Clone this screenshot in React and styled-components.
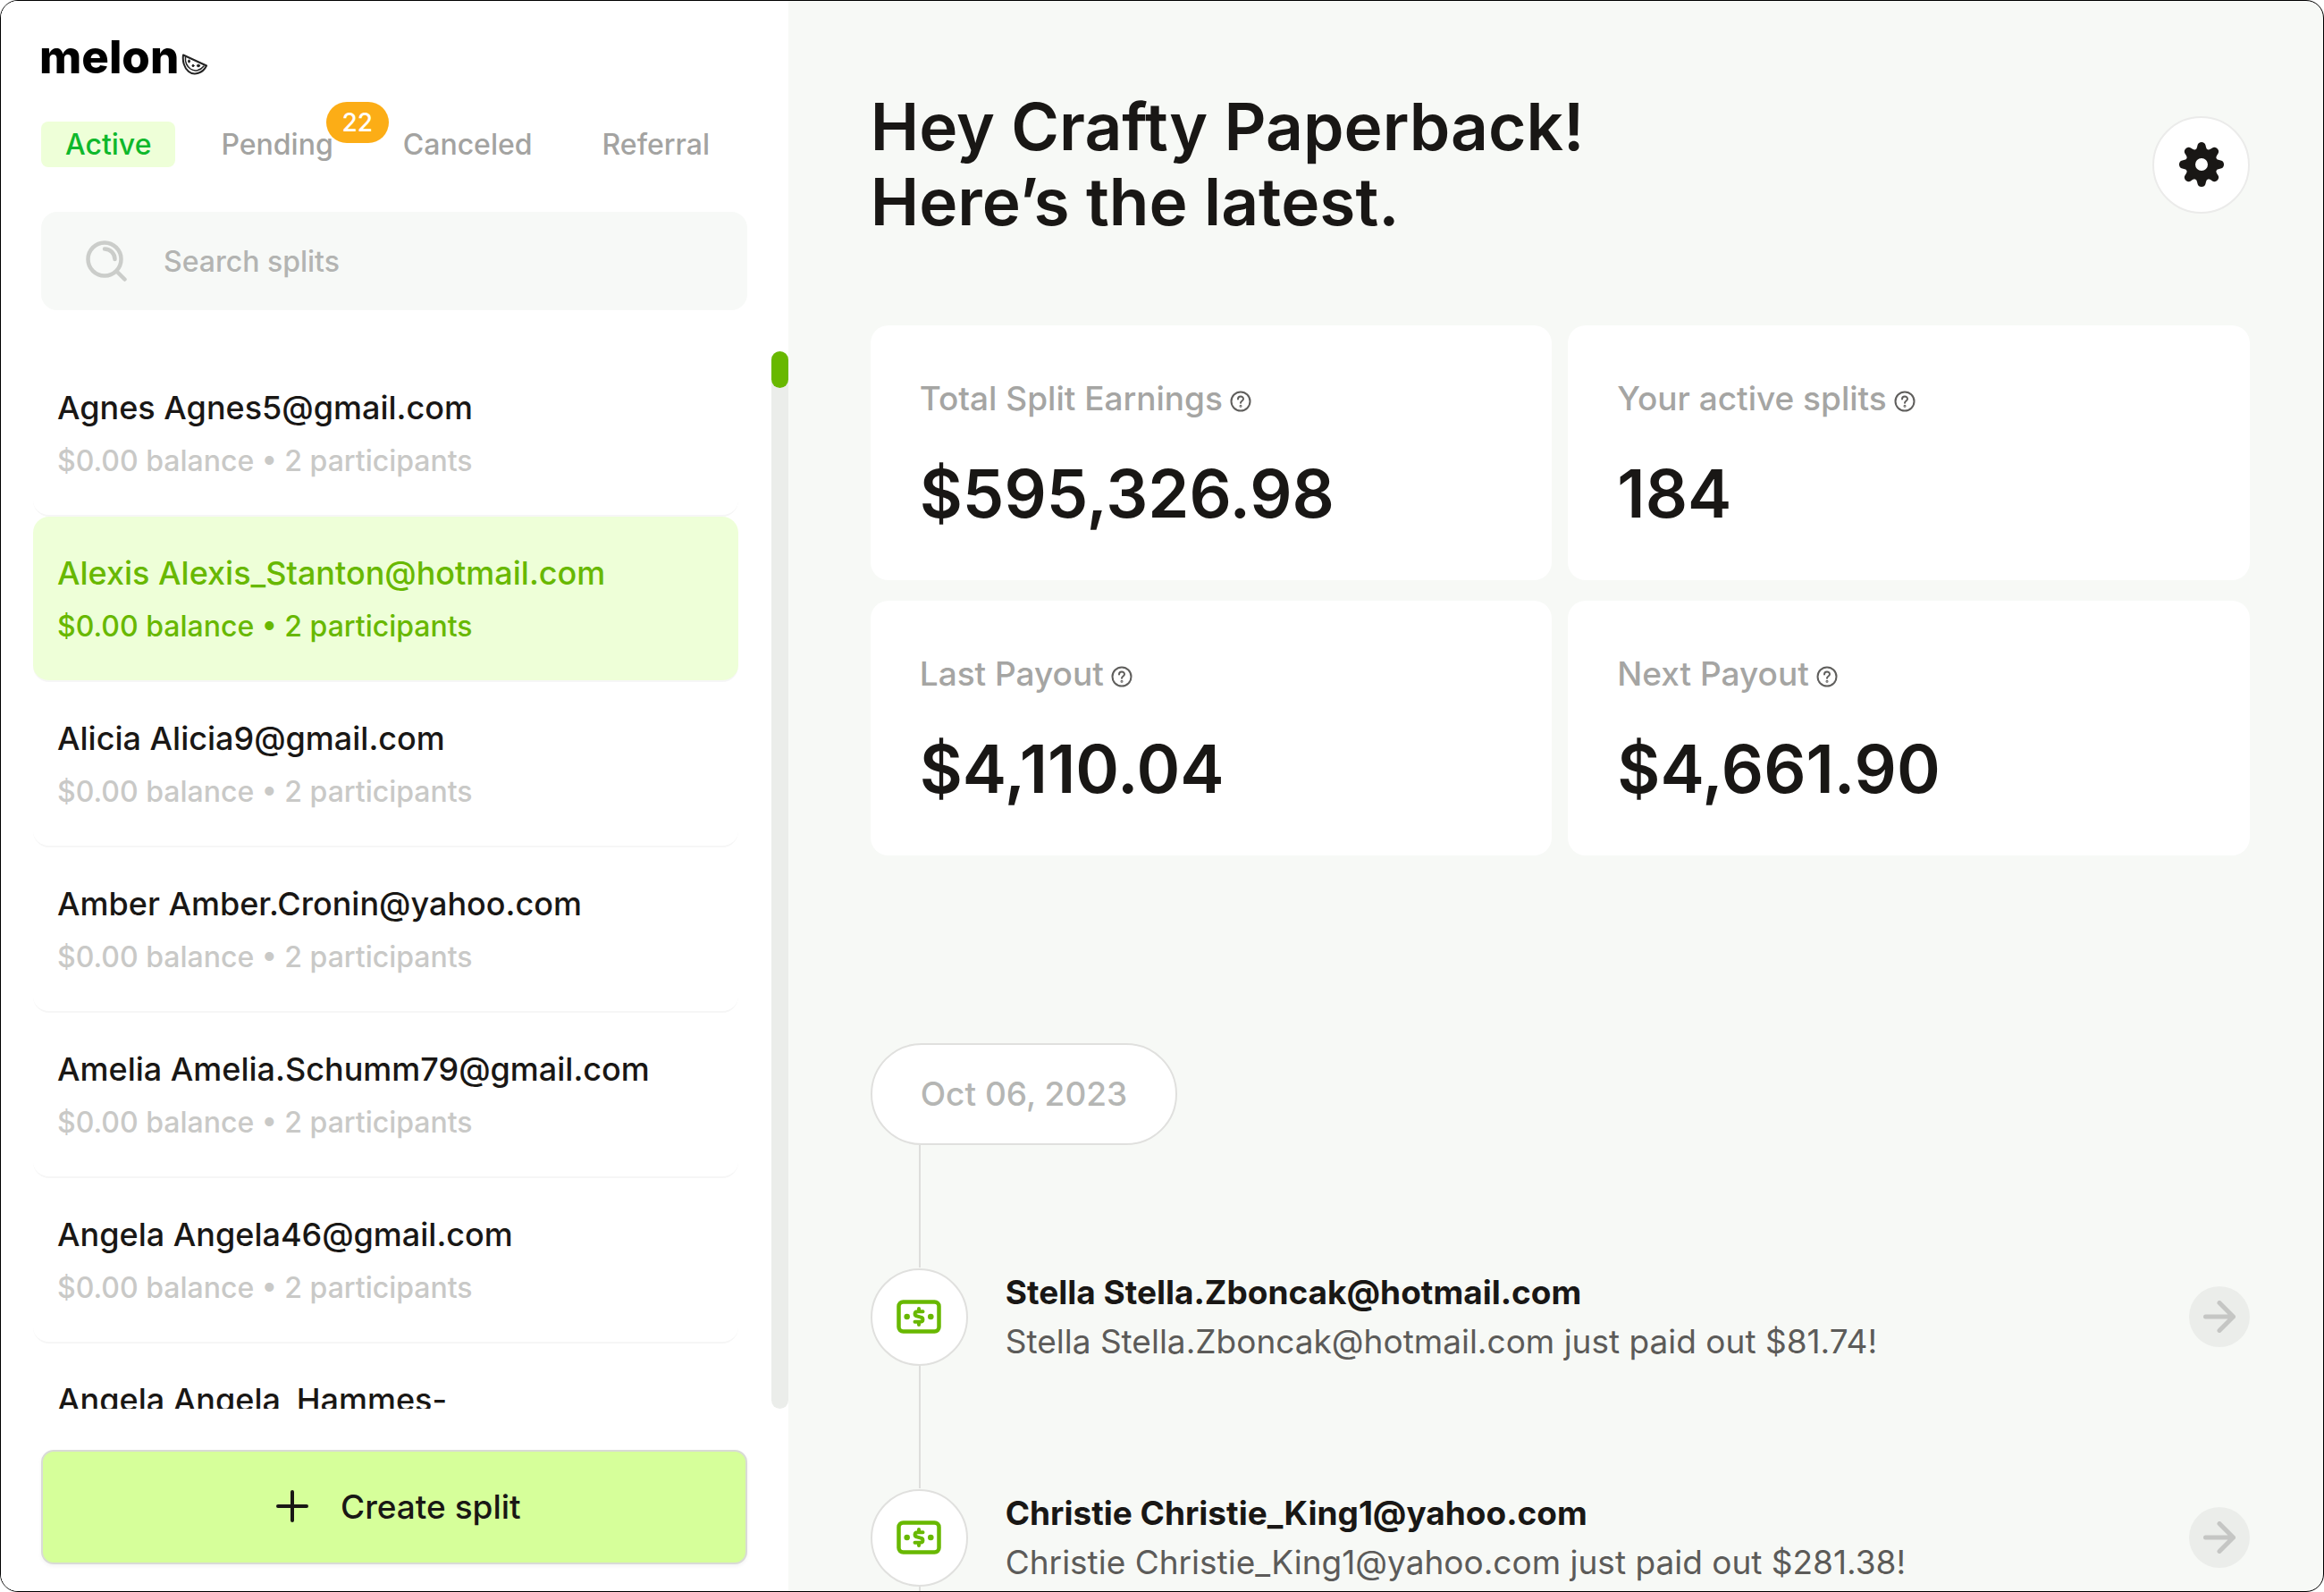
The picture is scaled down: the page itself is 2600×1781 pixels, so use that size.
import React, { useState } from 'react'
import styled, { createGlobalStyle } from 'styled-components'

const GlobalStyle = createGlobalStyle`
  * {
    box-sizing: border-box;
  }
  body {
    margin: 0;
    background: #ffffff;
    font-family: Inter, "Liberation Sans", sans-serif;
    color: #191715;
  }
  button, input {
    font-family: inherit;
    color: inherit;
  }
`

const Frame = styled.div`
  display: flex;
  height: 100vh;
  overflow: hidden;
  border: 1px solid #000000;
  border-radius: 20px;
  background: #f7f9f6;
`

const Sidebar = styled.aside`
  display: flex;
  flex-direction: column;
  flex: 0 0 33.9%;
  min-width: 0;
  padding: 33px 0 30px;
  background: #ffffff;
`

const Logo = styled.a`
  display: flex;
  align-items: center;
  gap: 3px;
  margin: 0 43px 42px;
  font-size: 51px;
  line-height: 60px;
  font-weight: 800;
  color: #000000;
  text-decoration: none;
`

const MelonSlice = styled.svg`
  width: 30px;
  height: 24px;
  margin-top: 16px;
`

const Tabs = styled.nav`
  display: flex;
  gap: 24px;
  margin: 0 45px;
`

const Tab = styled.button`
  position: relative;
  height: 51px;
  padding: 0 27px;
  border: none;
  border-radius: 8px;
  font-size: 32px;
  line-height: 51px;
  font-weight: 500;
  cursor: pointer;
  background: ${(props) => (props.$active ? '#eeffd8' : 'transparent')};
  color: ${(props) => (props.$active ? '#0fb82c' : '#a3a3a1')};
`

const Badge = styled.span`
  position: absolute;
  top: -22px;
  right: -35px;
  min-width: 70px;
  height: 46px;
  border-radius: 23px;
  background: #fcad16;
  color: #ffffff;
  font-size: 28px;
  line-height: 46px;
  text-align: center;
`

const Search = styled.label`
  display: flex;
  align-items: center;
  gap: 41px;
  height: 110px;
  flex-shrink: 0;
  margin: 50px 46px 46px 45px;
  padding: 0 50px;
  border-radius: 18px;
  background: #f7f9f7;
`

const SearchInput = styled.input`
  flex: 1;
  min-width: 0;
  padding: 0;
  border: none;
  outline: none;
  background: transparent;
  font-size: 32px;
  font-weight: 500;
  &::placeholder {
    color: #b3b4b2;
    opacity: 1;
  }
`

const ListArea = styled.div`
  display: flex;
  flex: 1;
  min-height: 0;
  gap: 37px;
  padding-left: 36px;
`

const SplitList = styled.ul`
  flex: 1;
  min-width: 0;
  margin: 0;
  padding: 0;
  overflow: hidden;
  list-style: none;
`

const SplitRow = styled.button`
  display: flex;
  flex-direction: column;
  gap: 16px;
  width: 100%;
  padding: 39px 27px 40px;
  border: none;
  border-bottom: 2px solid #f6f6f6;
  border-radius: 18px;
  text-align: left;
  cursor: pointer;
  background: ${(props) => (props.$selected ? '#eeffd8' : '#ffffff')};
  color: ${(props) => (props.$selected ? '#68b800' : '#191715')};
`

const SplitName = styled.span`
  font-size: 36px;
  line-height: 48px;
  font-weight: 500;
`

const SplitMeta = styled.span`
  font-size: 32px;
  line-height: 40px;
  font-weight: 500;
  color: ${(props) => (props.$selected ? '#68b800' : '#c9c9c7')};
`

const ScrollTrack = styled.div`
  width: 19px;
  border-radius: 10px;
  background: #ebedea;
`

const ScrollThumb = styled.div`
  height: 41px;
  border-radius: 10px;
  background: #68b800;
`

const CreateButton = styled.button`
  display: flex;
  align-items: center;
  justify-content: center;
  gap: 36px;
  height: 128px;
  flex-shrink: 0;
  margin: 46px 46px 0 45px;
  padding: 0 0 2px 10px;
  border: 2px solid #d9dbd6;
  border-radius: 14px;
  background: #d6ff9a;
  box-shadow: 0 2px 4px rgba(0, 0, 0, 0.05);
  font-size: 37px;
  font-weight: 500;
  cursor: pointer;
`

const Main = styled.main`
  flex: 1;
  min-width: 0;
  padding: 99px 82px 0 92px;
  overflow: hidden;
`

const Header = styled.header`
  display: flex;
  align-items: center;
  justify-content: space-between;
  margin-bottom: 96px;
`

const Title = styled.h1`
  margin: 0;
  font-size: 73px;
  line-height: 84px;
  font-weight: 600;
`

const Round = styled.span`
  display: flex;
  align-items: center;
  justify-content: center;
  width: 109px;
  height: 109px;
  flex-shrink: 0;
  border: 2px solid #e0e0de;
  border-radius: 50%;
  background: #ffffff;
`

const SettingsButton = styled(Round)`
  padding: 0;
  border-color: #ebebea;
  cursor: pointer;
`

const Stats = styled.section`
  display: grid;
  grid-template-columns: 1fr 1fr;
  gap: 23px 18px;
  margin-bottom: 210px;
`

const Card = styled.article`
  padding: 58px 55px 55px;
  border-radius: 20px;
  background: #ffffff;
`

const CardLabel = styled.h2`
  display: flex;
  align-items: center;
  gap: 8px;
  margin: 0 0 40px;
  font-size: 37px;
  line-height: 48px;
  font-weight: 500;
  color: #a5a5a3;
`

const CardValue = styled.p`
  margin: 0;
  font-size: 74px;
  line-height: 84px;
  font-weight: 600;
`

const HelpSvg = styled.svg`
  width: 24px;
  height: 24px;
  margin-top: 6px;
`

const DatePill = styled.time`
  display: block;
  width: fit-content;
  padding: 0 54px;
  border: 2px solid #e0e0de;
  border-radius: 57px;
  background: #ffffff;
  font-size: 37px;
  line-height: 110px;
  font-weight: 500;
  color: #b5b6b4;
`

const Connector = styled.div`
  width: 2px;
  height: 137px;
  margin-left: 54px;
  background: #dededc;
`

const Event = styled.div`
  display: flex;
  align-items: center;
`

const EventText = styled.div`
  flex: 1;
  min-width: 0;
  padding: 0 42px;
  font-size: 37px;
  line-height: 55px;
`

const EventName = styled.div`
  font-weight: 700;
`

const EventDetail = styled.div`
  color: #5c5b59;
`

const OpenLink = styled.a`
  display: flex;
  align-items: center;
  justify-content: center;
  width: 68px;
  height: 68px;
  border-radius: 50%;
  background: #ebedea;
`

const tabs = [
  { name: 'Active' },
  { name: 'Pending', count: 22 },
  { name: 'Canceled' },
  { name: 'Referral' },
]

const splits = [
  'Agnes Agnes5@gmail.com',
  'Alexis Alexis_Stanton@hotmail.com',
  'Alicia Alicia9@gmail.com',
  'Amber Amber.Cronin@yahoo.com',
  'Amelia Amelia.Schumm79@gmail.com',
  'Angela Angela46@gmail.com',
  'Angela Angela_Hammes-',
]

const stats = [
  { label: 'Total Split Earnings', value: '$595,326.98' },
  { label: 'Your active splits', value: '184' },
  { label: 'Last Payout', value: '$4,110.04' },
  { label: 'Next Payout', value: '$4,661.90' },
]

const events = [
  { name: 'Stella Stella.Zboncak@hotmail.com', amount: '$81.74' },
  { name: 'Christie Christie_King1@yahoo.com', amount: '$281.38' },
]

const teeth = [0, 45, 90, 135, 180, 225, 270, 315]

function Melon() {
  return (
    <MelonSlice viewBox="0 0 30 24" fill="none" stroke="#222" strokeLinecap="round" strokeLinejoin="round" aria-hidden="true">
      <path d="M2 1.5 L28 13.5 C24 22 14 25 8 20 C3 16 1 8 2 1.5Z" strokeWidth="2" />
      <path d="M4.5 4 C4 9 6 14 10 17 C15 20.5 21 19 25 14" strokeWidth="1.5" />
      <ellipse cx="8.5" cy="8.5" rx="1" ry="1.5" fill="#222" />
      <ellipse cx="13" cy="13.5" rx="1" ry="1.2" fill="#222" />
      <ellipse cx="19" cy="13.5" rx="1.6" ry="1.3" fill="#222" />
    </MelonSlice>
  )
}

function SearchIcon() {
  return (
    <svg width="46" height="46" viewBox="0 0 46 46" fill="none" stroke="#cbcdca" strokeWidth="4.5" strokeLinecap="round" aria-hidden="true">
      <circle cx="21" cy="21" r="18.5" />
      <path d="M34.5 34.5 L43.5 43.5" />
      <path d="M21 9.5 A11.5 11.5 0 0 1 32.5 21" />
    </svg>
  )
}

function PlusIcon() {
  return (
    <svg width="36" height="36" viewBox="0 0 36 36" fill="none" stroke="#191715" strokeWidth="4" strokeLinecap="round" aria-hidden="true">
      <path d="M18 2 V34 M2 18 H34" />
    </svg>
  )
}

function GearIcon() {
  return (
    <svg width="52" height="52" viewBox="-26 -26 52 52" fill="#191715" aria-hidden="true">
      {teeth.map((angle) => (
        <path
          key={angle}
          transform={`rotate(${angle})`}
          d="M-8 -14 C-5.5 -17 -5 -19 -4.5 -21.5 C-3.8 -26.2 3.8 -26.2 4.5 -21.5 C5 -19 5.5 -17 8 -14Z"
        />
      ))}
      <circle r="12.5" fill="none" stroke="#191715" strokeWidth="11" />
    </svg>
  )
}

function HelpIcon() {
  return (
    <HelpSvg viewBox="0 0 24 24" fill="none" stroke="#5f5e5c" strokeWidth="2" strokeLinecap="round" aria-hidden="true">
      <circle cx="12" cy="12" r="10.5" />
      <path d="M9 9.5 C9 5.5 15 5.5 15 9.3 C15 11.5 12 11.5 12 13.8" />
      <circle cx="12" cy="17.3" r="0.5" />
    </HelpSvg>
  )
}

function CashIcon() {
  return (
    <svg width="50" height="38" viewBox="0 0 50 38" fill="none" stroke="#68b800" strokeLinecap="round" strokeLinejoin="round" aria-hidden="true">
      <rect x="2.5" y="2.5" width="45" height="33" rx="5" strokeWidth="4.5" />
      <circle cx="11.7" cy="19" r="3.3" fill="#68b800" stroke="none" />
      <circle cx="38.3" cy="19" r="3.3" fill="#68b800" stroke="none" />
      <path d="M29.5 13.2 H24 C19.5 13.2 19.5 18 23.5 18.6 L26.5 19.4 C30.5 20 30.500 24.8 26 24.8 H20.5 M25 10 V13 M25 25 V28" strokeWidth="4" />
    </svg>
  )
}

function ArrowIcon() {
  return (
    <svg width="36" height="36" viewBox="0 0 36 36" fill="none" stroke="#c5c6c4" strokeWidth="5" strokeLinecap="round" strokeLinejoin="round" aria-hidden="true">
      <path d="M2.5 18 H33.5 M18 2.5 L33.5 18 L18 33.5" />
    </svg>
  )
}

function App() {
  const [tab, setTab] = useState('Active')
  const [selected, setSelected] = useState(1)
  const [query, setQuery] = useState('')

  return (
    <>
      <GlobalStyle />
      <Frame>
        <Sidebar>
          <Logo href="#">
            melon
            <Melon />
          </Logo>
          <Tabs>
            {tabs.map((t) => (
              <Tab key={t.name} $active={t.name === tab} onClick={() => setTab(t.name)}>
                {t.name}
                {t.count && <Badge>{t.count}</Badge>}
              </Tab>
            ))}
          </Tabs>
          <Search>
            <SearchIcon />
            <SearchInput
              type="text"
              aria-label="Search splits"
              placeholder="Search splits"
              value={query}
              onChange={(e) => setQuery(e.target.value)}
            />
          </Search>
          <ListArea>
            <SplitList>
              {splits.map((name, i) => (
                <li key={name}>
                  <SplitRow $selected={i === selected} onClick={() => setSelected(i)}>
                    <SplitName>{name}</SplitName>
                    <SplitMeta $selected={i === selected}>$0.00 balance • 2 participants</SplitMeta>
                  </SplitRow>
                </li>
              ))}
            </SplitList>
            <ScrollTrack>
              <ScrollThumb />
            </ScrollTrack>
          </ListArea>
          <CreateButton>
            <PlusIcon />
            Create split
          </CreateButton>
        </Sidebar>
        <Main>
          <Header>
            <Title>
              Hey Crafty Paperback!
              <br />
              Here’s the latest.
            </Title>
            <SettingsButton as="button" aria-label="Settings">
              <GearIcon />
            </SettingsButton>
          </Header>
          <Stats>
            {stats.map((s) => (
              <Card key={s.label}>
                <CardLabel>
                  {s.label}
                  <HelpIcon />
                </CardLabel>
                <CardValue>{s.value}</CardValue>
              </Card>
            ))}
          </Stats>
          <DatePill dateTime="2023-10-06">Oct 06, 2023</DatePill>
          <Connector />
          {events.map((e) => (
            <React.Fragment key={e.name}>
              <Event>
                <Round>
                  <CashIcon />
                </Round>
                <EventText>
                  <EventName>{e.name}</EventName>
                  <EventDetail>
                    {e.name} just paid out {e.amount}!
                  </EventDetail>
                </EventText>
                <OpenLink href="#" aria-label={`Open ${e.name}`}>
                  <ArrowIcon />
                </OpenLink>
              </Event>
              <Connector />
            </React.Fragment>
          ))}
        </Main>
      </Frame>
    </>
  )
}

export default App
